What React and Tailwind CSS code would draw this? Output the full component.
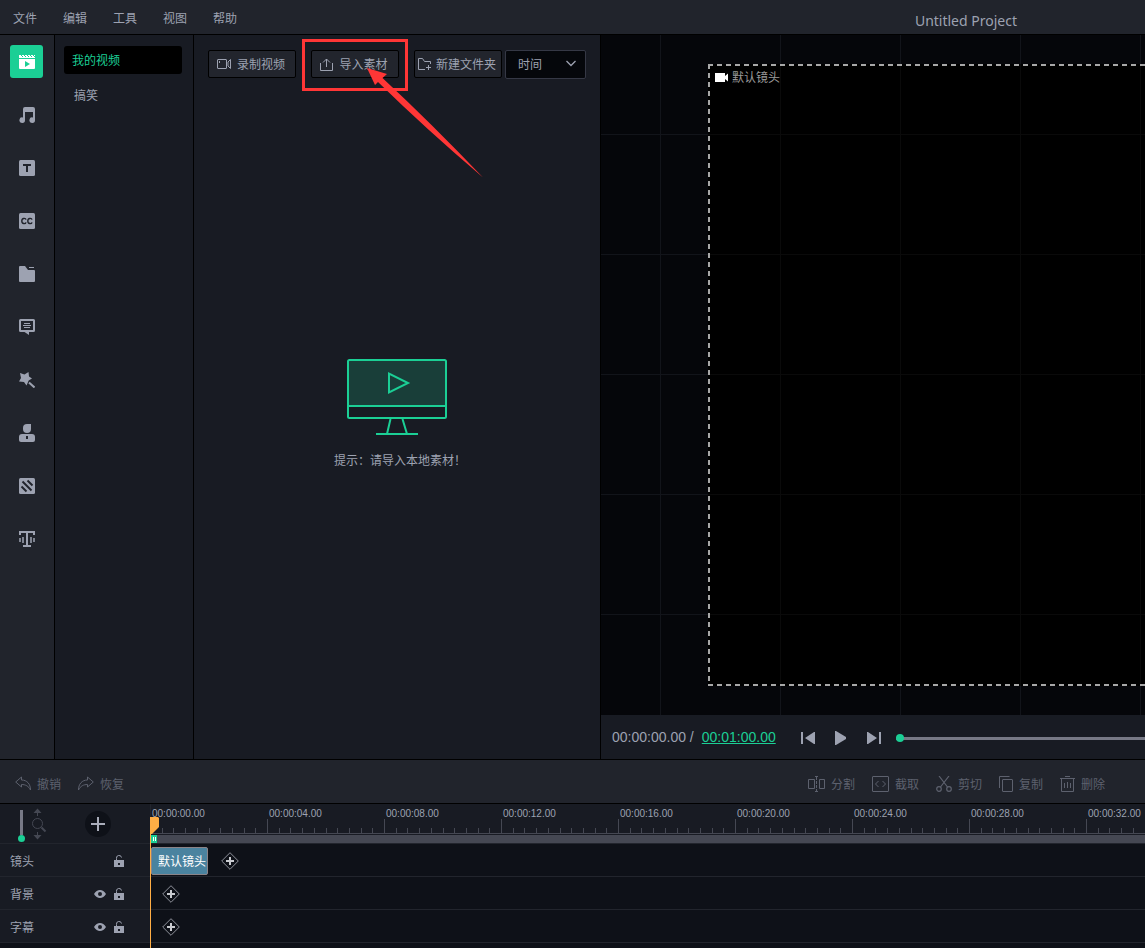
import { useState } from 'react'

const menus = ['文件', '编辑', '工具', '视图', '帮助']

const railItems = [
  { id: 'video', label: '视频', icon: VideoIcon },
  { id: 'music', label: '音乐', icon: MusicIcon },
  { id: 'text', label: '文本', icon: TextIcon },
  { id: 'caption', label: '字幕', icon: CaptionIcon },
  { id: 'folder', label: '素材', icon: FolderIcon },
  { id: 'comment', label: '批注', icon: CommentIcon },
  { id: 'effect', label: '特效', icon: WandIcon },
  { id: 'role', label: '角色', icon: PersonIcon },
  { id: 'background', label: '背景', icon: PatternIcon },
  { id: 'voice', label: '配音', icon: VoiceTextIcon },
]

const editTools = [
  { label: '分割', icon: SplitIcon },
  { label: '截取', icon: CropIcon },
  { label: '剪切', icon: CutIcon },
  { label: '复制', icon: CopyIcon },
  { label: '删除', icon: TrashIcon },
]

const tracks = [
  { name: '镜头', canHide: false, clip: '默认镜头' },
  { name: '背景', canHide: true },
  { name: '字幕', canHide: true },
]

const SECONDS_PER_MARK = 4
const marks = Array.from({ length: 9 }, (_, i) => i * SECONDS_PER_MARK)

function formatTime(sec) {
  const m = String(Math.floor(sec / 60)).padStart(2, '0')
  const s = String(sec % 60).padStart(2, '0')
  return `00:${m}:${s}.00`
}

/* ---------- icons ---------- */

function VideoIcon() {
  return (
    <svg width="16" height="16" viewBox="0 0 16 16">
      <path fill="#fff" d="M0 1h16v3H0z" />
      <path stroke="#1bcf95" d="M2 1l2 2M5 1l2 2M8 1l2 2M11 1l2 2M14 1l2 2" />
      <path fill="#fff" d="M0 5h16v9a1 1 0 0 1-1 1H1a1 1 0 0 1-1-1z" />
      <path fill="#1bcf95" d="M6 7v6l5-3z" />
    </svg>
  )
}

function MusicIcon() {
  return (
    <svg width="16" height="16" viewBox="0 0 16 16" fill="currentColor">
      <path d="M4 2a2 2 0 0 1 2-2h8a2 2 0 0 1 2 2v11.2a2.8 2.8 0 1 1-2-2.7V5H6v8.2a2.8 2.8 0 1 1-2-2.7z" />
    </svg>
  )
}

function TextIcon() {
  return (
    <svg width="16" height="16" viewBox="0 0 16 16">
      <rect width="16" height="16" rx="1.5" fill="currentColor" />
      <path stroke="#21242c" strokeWidth="2" d="M4 5h8M8 5v7" />
    </svg>
  )
}

function CaptionIcon() {
  return (
    <svg width="16" height="16" viewBox="0 0 16 16">
      <rect width="16" height="16" rx="1.5" fill="currentColor" />
      <path
        fill="none"
        stroke="#21242c"
        strokeWidth="1.4"
        d="M7 6.7C6.6 4.8 2.8 4.8 2.8 8s3.8 3.2 4.2 1.3M13 6.7C12.6 4.8 8.8 4.8 8.8 8s3.8 3.2 4.2 1.3"
      />
    </svg>
  )
}

function FolderIcon() {
  return (
    <svg width="16" height="16" viewBox="0 0 16 16" fill="currentColor">
      <path d="M1 0h5l3 4h6a1 1 0 0 1 1 1v10a1 1 0 0 1-1 1H1a1 1 0 0 1-1-1V1a1 1 0 0 1 1-1z" />
      <path d="M10 1h5v1h-5z" />
    </svg>
  )
}

function CommentIcon() {
  return (
    <svg width="16" height="16" viewBox="0 0 16 16" fill="none" stroke="currentColor">
      <rect x="1" y="1" width="14" height="11" rx="0.5" strokeWidth="2" />
      <path fill="currentColor" stroke="none" d="M4 12h6v4z" />
      <path d="M5 4.5h6M4 6.5h8M5 8.5h6" />
    </svg>
  )
}

function WandIcon() {
  return (
    <svg width="16" height="16" viewBox="0 0 16 16">
      <path fill="currentColor" d="M9.5 0l.5 4.5 3 2L9.7 8.5 7.5 13.5 5 10 0 9.5l2-3.5L1 1l4.500 1.500z" />
      <path stroke="currentColor" strokeWidth="2" d="M10 10.5l5.500 5" />
    </svg>
  )
}

function PersonIcon() {
  return (
    <svg width="16" height="18" viewBox="0 0 16 18">
      <path fill="currentColor" d="M8 0h4v5a4 4 0 0 1-8 0V4a4 4 0 0 1 4-4z" />
      <path fill="currentColor" d="M3 10h10a3 3 0 0 1 3 3v3a2 2 0 0 1-2 2H2a2 2 0 0 1-2-2v-3a3 3 0 0 1 3-3z" />
      <path fill="#21242c" d="M7 12h2v3H7z" />
    </svg>
  )
}

function PatternIcon() {
  return (
    <svg width="16" height="16" viewBox="0 0 16 16">
      <rect width="16" height="16" rx="1.5" fill="currentColor" />
      <path stroke="#21242c" strokeWidth="1.9" d="M8.5 2.5l5 5M3.5 3.5l9 9M2.5 8.5l5 5" />
    </svg>
  )
}

function VoiceTextIcon() {
  return (
    <svg width="16" height="16" viewBox="0 0 16 16" fill="none" stroke="currentColor">
      <path strokeWidth="2" d="M0 1h16M8 1v14M4 15h8M1 1v3M15 1v3" />
      <path strokeWidth="1.5" d="M4 6v6M12 6v6M1 7v4M15 7v4" />
    </svg>
  )
}

function RecordIcon() {
  return (
    <svg width="14" height="12" viewBox="0 0 14 12" fill="none" stroke="currentColor">
      <rect x="0.5" y="1.5" width="9" height="9" rx="0.5" />
      <path d="M2.5 3v2M13.5 1.5v9L11 8V4z" />
    </svg>
  )
}

function ImportIcon() {
  return (
    <svg width="13" height="13" viewBox="0 0 13 13" fill="none" stroke="currentColor">
      <path d="M.5 5v7.5h12V5M6.5 9V1M3 4.500l3.500-3.500L10 4.500" />
    </svg>
  )
}

function NewFolderIcon() {
  return (
    <svg width="14" height="13" viewBox="0 0 14 13" fill="none" stroke="currentColor">
      <path d="M7 11.5H.5V.5h4l2 3h6V6M10.5 7v5M8 9.5h5" />
    </svg>
  )
}

function UndoIcon() {
  return (
    <svg width="16" height="15" viewBox="0 0 16 15" fill="none" stroke="currentColor">
      <path strokeLinejoin="round" d="M6.5 1L.7 6l5.800 5V8.500c4 0 7 1.500 9 5.500 0-6-3.500-10-9-10z" />
    </svg>
  )
}

function RedoIcon() {
  return (
    <svg width="16" height="15" viewBox="0 0 16 15" fill="none" stroke="currentColor">
      <path strokeLinejoin="round" d="M9.5 1l5.800 5-5.800 5V8.500c-4 0-7 1.500-9 5.500 0-6 3.500-10 9-10z" />
    </svg>
  )
}

function SplitIcon() {
  return (
    <svg width="17" height="16" viewBox="0 0 17 16" fill="none" stroke="currentColor">
      <path d="M.5 3.5h6v9h-6zM11.5 3.5h5v9h-5zM7 .5h3M7 15.5h3" />
      <path strokeDasharray="3 1" d="M8.5 1v14" />
    </svg>
  )
}

function CropIcon() {
  return (
    <svg width="17" height="16" viewBox="0 0 17 16" fill="none" stroke="currentColor">
      <rect x="0.5" y="0.5" width="16" height="15" rx="0.5" />
      <path d="M6.5 5L3.5 8l3 3M10.5 5l3 3-3 3" />
    </svg>
  )
}

function CutIcon() {
  return (
    <svg width="16" height="16" viewBox="0 0 16 16" fill="none" stroke="currentColor" strokeWidth="1.2">
      <circle cx="3" cy="13" r="2.3" />
      <circle cx="13" cy="13" r="2.3" />
      <path d="M3 0l8.500 11M13 0L4.500 11" />
    </svg>
  )
}

function CopyIcon() {
  return (
    <svg width="14" height="16" viewBox="0 0 14 16" fill="none" stroke="currentColor">
      <path d="M.5 12V.5h10" />
      <rect x="3.5" y="3.5" width="10" height="12" rx="0.5" />
    </svg>
  )
}

function TrashIcon() {
  return (
    <svg width="15" height="16" viewBox="0 0 15 16" fill="none" stroke="currentColor">
      <path d="M5 .5h5M0 2.5h15M1.5 3v12.500h12V3M4.5 7v5M7.5 6v6M10.5 7v5" />
    </svg>
  )
}

function EyeIcon() {
  return (
    <svg width="12" height="10" viewBox="0 0 12 10">
      <path fill="currentColor" fillRule="evenodd" d="M0 5c3-5.300 9-5.300 12 0-3 5.300-9 5.300-12 0zm6-2a2 2 0 1 0 0 4 2 2 0 0 0 0-4z" />
    </svg>
  )
}

function LockIcon() {
  return (
    <svg width="10" height="12" viewBox="0 0 10 12">
      <path fill="none" stroke="currentColor" d="M2.5 5V3.500a2.500 2.500 0 0 1 5-1" />
      <path fill="currentColor" fillRule="evenodd" d="M0 5h10v7H0zm4 3v2h2V8z" />
    </svg>
  )
}

function DiamondPlusIcon() {
  return (
    <svg width="18" height="18" viewBox="0 0 18 18" fill="none">
      <path stroke="#8f929b" d="M9 .7L17.3 9 9 17.3.7 9z" />
      <path stroke="#c9cbd0" strokeWidth="2" d="M5 9h8M9 5v8" />
    </svg>
  )
}

function ZoomIcon() {
  return (
    <svg width="16" height="32" viewBox="0 0 16 32" fill="none" stroke="#454853">
      <path d="M6.5 2v6M6.5 24v6" />
      <path fill="#454853" stroke="none" d="M2.5 5l4-4.500 4 4.500zM2.5 27l4 4.500 4-4.500z" />
      <circle cx="6.5" cy="15.5" r="5" />
      <path strokeWidth="2" d="M10.5 19.5l4 4" />
    </svg>
  )
}

function MonitorArt() {
  return (
    <svg width="100" height="77" viewBox="0 0 100 77" fill="none" stroke="#1bcf95" strokeWidth="2">
      <path fill="#193e39" stroke="none" d="M1 1h98v46H1z" />
      <rect x="1" y="1" width="98" height="58" rx="1.5" />
      <path d="M1 47h98M43.5 60L40 75M55.5 60l4.500 15M29 75h42" />
      <path d="M42 14.5v19L61 24z" />
    </svg>
  )
}

/* ---------- sections ---------- */

function ImportHint() {
  return (
    <svg
      className="pointer-events-none absolute -top-[11px] -left-[9px] z-10"
      width="182"
      height="140"
      viewBox="0 0 182 140"
      aria-hidden="true"
    >
      <rect x="1.5" y="1.5" width="103" height="49" fill="none" stroke="#ff3636" strokeWidth="3" />
      <path fill="#ff3636" d="M65 29l20 6-4.500 4Q129 84 181 138.500 124 90 76 43l-3 3z" />
    </svg>
  )
}

function Header() {
  return (
    <header className="flex h-[35px] items-center border-b border-black bg-[#21242c] pt-0.5 pr-32 pl-[13px]">
      <nav className="flex gap-[26px]">
        {menus.map((m) => (
          <button key={m}>{m}</button>
        ))}
      </nav>
      <h1 className="mt-1.5 ml-auto font-['Noto_Sans',sans-serif] text-sm">Untitled Project</h1>
    </header>
  )
}

function Rail() {
  const [active, setActive] = useState('video')
  return (
    <nav className="flex w-[55px] shrink-0 flex-col gap-5 border-r border-black bg-[#21242c] pt-2.5 pl-2.5">
      {railItems.map(({ id, label, icon: Icon }) => (
        <button
          key={id}
          aria-label={label}
          onClick={() => setActive(id)}
          className={`flex size-[33px] items-center justify-center rounded-[3px] ${active === id ? 'bg-[#1bcf95]' : ''}`}
        >
          <Icon />
        </button>
      ))}
    </nav>
  )
}

function Sidebar() {
  return (
    <aside className="flex w-[139px] shrink-0 flex-col gap-[7px] border-r border-black pt-[11px] pr-[11px] pl-[9px]">
      <button className="h-7 rounded-[3px] bg-black px-2 text-left text-[#1bcf95]">我的视频</button>
      <button className="h-7 px-2.5 text-left">搞笑</button>
    </aside>
  )
}

function ToolButton({ icon: Icon, children }) {
  return (
    <button className="flex h-7 w-[88px] items-center justify-center gap-1.5 rounded-[2px] border border-black bg-[#22252d] pr-0.5 whitespace-nowrap">
      <Icon />
      {children}
    </button>
  )
}

function MediaPanel() {
  return (
    <section className="flex w-[407px] shrink-0 flex-col border-r border-black">
      <div className="flex gap-[15px] pt-[15px] pl-3.5">
        <ToolButton icon={RecordIcon}>录制视频</ToolButton>
        <div className="relative">
          <ToolButton icon={ImportIcon}>导入素材</ToolButton>
          <ImportHint />
        </div>
        <div className="flex gap-[3px]">
          <button className="flex h-7 w-[88px] items-center gap-1 rounded-[2px] border border-black bg-[#22252d] pl-[3px] whitespace-nowrap">
            <NewFolderIcon />
            新建文件夹
          </button>
          <div className="relative">
            <select
              aria-label="排序"
              className="h-[29px] w-[81px] appearance-none rounded-[2px] border border-[#353845] bg-[#05070b] px-3 pb-0.5"
            >
              <option>时间</option>
              <option>名称</option>
            </select>
            <svg
              className="pointer-events-none absolute top-2.5 right-2.5"
              width="10"
              height="7"
              viewBox="0 0 10 7"
              fill="none"
              stroke="currentColor"
              strokeWidth="1.3"
            >
              <path d="M.5 1L5 5.500 9.500 1" />
            </svg>
          </div>
        </div>
      </div>
      <div className="flex flex-1 flex-col items-center justify-center gap-4 pb-3">
        <MonitorArt />
        <p className="pl-1.5">提示：请导入本地素材！</p>
      </div>
    </section>
  )
}

function Preview() {
  return (
    <section className="flex min-w-0 flex-1 flex-col">
      <div className="flex flex-1 bg-[#05060a] bg-[linear-gradient(to_right,#12141a_1px,transparent_1px),linear-gradient(#12141a_1px,transparent_1px)] bg-[size:120px_120px] bg-[position:59px_99px] pt-[29px] pb-[29px] pl-[107px]">
        <div className="flex-1 bg-black bg-[linear-gradient(to_right,#0a0a0a_1px,transparent_1px),linear-gradient(#0a0a0a_1px,transparent_1px)] bg-[size:120px_120px] bg-[position:72px_70px]">
          <div className="h-full bg-[repeating-linear-gradient(to_right,#a8a8a8_0_5px,transparent_5px_9px),repeating-linear-gradient(to_right,#a8a8a8_0_5px,transparent_5px_9px),repeating-linear-gradient(#a8a8a8_0_5px,transparent_5px_9px)] bg-[size:100%_2px,100%_2px,2px_100%] bg-[position:0_0,0_100%,0_0] bg-no-repeat">
            <div className="flex items-center gap-1 pt-[5px] pl-[7px] text-[#999]">
              <svg width="13" height="9" viewBox="0 0 13 9" fill="#fff">
                <path d="M0 0h10v3l3-2.500v8L10 6v3H0z" />
              </svg>
              默认镜头
            </div>
          </div>
        </div>
      </div>
      <div className="flex h-11 items-center pl-[11px]">
        <div className="flex gap-2 font-['Liberation_Sans',sans-serif] text-sm">
          <span>00:00:00.00 /</span>
          <a href="#end" className="text-[#1bcf95] underline">00:01:00.00</a>
        </div>
        <div className="mt-0.5 ml-[25px] flex items-center gap-[19px]">
          <button aria-label="上一帧">
            <svg width="15" height="14" viewBox="0 0 15 14" fill="currentColor">
              <path d="M0 1h2v12H0zM14 1v12h-1L4 7l9-6z" />
            </svg>
          </button>
          <button aria-label="播放">
            <svg width="12" height="14" viewBox="0 0 12 14" fill="currentColor">
              <path d="M1 0l10 6v2L1 14H0V0z" />
            </svg>
          </button>
          <button aria-label="下一帧">
            <svg width="15" height="14" viewBox="0 0 15 14" fill="currentColor">
              <path d="M13 1h2v12h-2zM1 1v12h1l9-6-9-6z" />
            </svg>
          </button>
        </div>
        <input
          type="range"
          aria-label="播放进度"
          defaultValue={0}
          className="mt-0.5 ml-[15px] h-2 min-w-0 flex-1 appearance-none bg-[linear-gradient(#777986,#777986)] bg-[size:100%_3px] bg-center bg-no-repeat [&::-webkit-slider-thumb]:size-2 [&::-webkit-slider-thumb]:appearance-none [&::-webkit-slider-thumb]:rounded-full [&::-webkit-slider-thumb]:bg-[#1bcf95]"
        />
      </div>
    </section>
  )
}

function EditBar() {
  return (
    <div className="flex h-11 items-center justify-between border-b border-black bg-[#21242c] pt-1 pr-10 pl-[15px] text-[#5d616e]">
      <div className="flex gap-[17px]">
        <button className="flex items-center gap-1.5"><UndoIcon />撤销</button>
        <button className="flex items-center gap-1.5"><RedoIcon />恢复</button>
      </div>
      <div className="flex gap-[17px]">
        {editTools.map(({ label, icon: Icon }) => (
          <button key={label} className="flex items-center gap-1.5"><Icon />{label}</button>
        ))}
      </div>
    </div>
  )
}

function Ruler() {
  return (
    <div className="min-w-0 flex-1 overflow-hidden border-l border-[#22252d]">
      <div className="-ml-px flex h-[30px] border-b border-[#454853]">
        {marks.map((sec, i) => (
          <div key={sec} className="flex w-[117px] shrink-0 flex-col justify-between">
            <span className="pt-1 pl-0.5 font-['Liberation_Sans',sans-serif] text-[10px] leading-3">{formatTime(sec)}</span>
            <div className="-mt-1 flex items-end">
              {Array.from({ length: 10 }, (_, n) => (
                <i
                  key={n}
                  className={`flex-1 border-l border-[#454853] ${n > 0 ? 'h-[5px]' : i > 0 ? 'h-[14px]' : 'h-[14px] border-transparent'}`}
                />
              ))}
            </div>
          </div>
        ))}
      </div>
      <div className="mt-px h-2 bg-[#454853]">
        <div className="flex h-2 w-1.5 items-center justify-center gap-px bg-[#1bcf95]">
          <i className="h-1 w-px bg-white" />
          <i className="h-1 w-px bg-white" />
        </div>
      </div>
    </div>
  )
}

function Playhead() {
  return (
    <div className="pointer-events-none absolute top-[13px] bottom-0 left-[150px] w-px bg-[#ffae45]">
      <svg width="9" height="17" viewBox="0 0 9 17" fill="#ffae45">
        <path d="M0 0h8l1 1v9l-7 7H0z" />
      </svg>
    </div>
  )
}

function Track({ name, canHide, clip }) {
  return (
    <div className="flex h-[33px] border-b border-[#22252d]">
      <div className="flex w-[150px] items-center bg-[#181b23] pt-0.5 pr-[26px] pl-2.5">
        <span className="flex-1">{name}</span>
        {canHide && <button aria-label={`隐藏${name}`} className="mr-2"><EyeIcon /></button>}
        <button aria-label={`锁定${name}`}><LockIcon /></button>
      </div>
      <div className="flex flex-1 items-center pt-0.5 pl-px">
        {clip && (
          <button className="h-7 w-[57px] rounded-[2px] border border-[#8b8488] bg-[#4a839f] pl-1.5 text-left whitespace-nowrap text-white">
            {clip}
          </button>
        )}
        <button aria-label="添加" className={clip ? 'ml-[13px]' : 'ml-[11px]'}><DiamondPlusIcon /></button>
      </div>
    </div>
  )
}

function Timeline() {
  return (
    <div className="relative bg-[#0e1118] pb-[5px]">
      <div className="flex h-10 border-b border-[#22252d] bg-[#181b23]">
        <div className="flex w-[150px] items-center pl-[18px]">
          <input
            type="range"
            aria-label="时间轴缩放"
            defaultValue={0}
            className="mb-px h-8 w-[7px] appearance-none self-end bg-[linear-gradient(#777986,#777986)] bg-[size:3px_25px] bg-top bg-no-repeat [direction:rtl] [writing-mode:vertical-lr] [&::-webkit-slider-thumb]:size-[7px] [&::-webkit-slider-thumb]:appearance-none [&::-webkit-slider-thumb]:rounded-full [&::-webkit-slider-thumb]:bg-[#1bcf95]"
          />
          <span className="ml-1.5"><ZoomIcon /></span>
          <button aria-label="添加轨道" className="ml-[38px] flex size-[26px] items-center justify-center rounded-full bg-[#0e1118]">
            <svg width="14" height="14" viewBox="0 0 14 14" stroke="#a9adba" strokeWidth="2">
              <path d="M0 7h14M7 0v14" />
            </svg>
          </button>
        </div>
        <Ruler />
      </div>
      {tracks.map((t) => (
        <Track key={t.name} {...t} />
      ))}
      <Playhead />
    </div>
  )
}

export default function App() {
  return (
    <div className="flex min-h-screen flex-col bg-[#181b23] font-['Noto_Sans_CJK_SC',sans-serif] text-xs text-[#9da2b1]">
      <Header />
      <main className="flex flex-1 border-b border-black">
        <Rail />
        <Sidebar />
        <MediaPanel />
        <Preview />
      </main>
      <EditBar />
      <Timeline />
    </div>
  )
}
